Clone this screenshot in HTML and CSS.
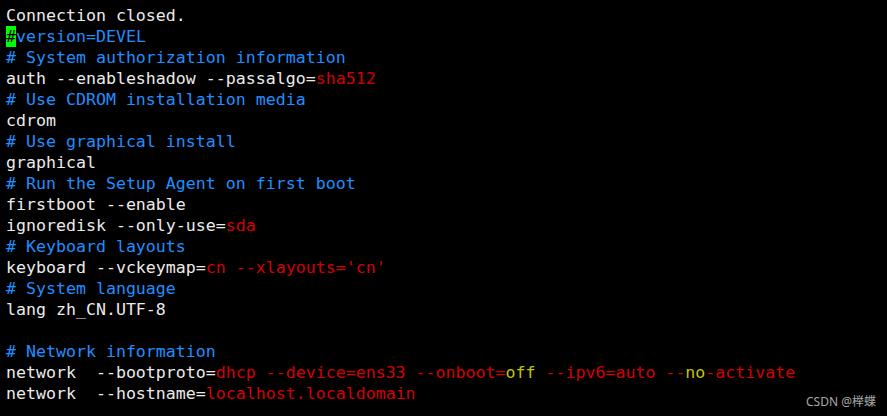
FILE: index.html
```html
<!DOCTYPE html>
<html>
<head>
<meta charset="utf-8">
<link rel="stylesheet" href="styles.css">
</head>
<body>
<div class="term">
<div class="ln">Connection closed.</div>
<div class="ln c"><span class="cur">#</span>version=DEVEL</div>
<div class="ln c"># System authorization information</div>
<div class="ln">auth --enableshadow --passalgo=<span class="r">sha512</span></div>
<div class="ln c"># Use CDROM installation media</div>
<div class="ln">cdrom</div>
<div class="ln c"># Use graphical install</div>
<div class="ln">graphical</div>
<div class="ln c"># Run the Setup Agent on first boot</div>
<div class="ln">firstboot --enable</div>
<div class="ln">ignoredisk --only-use=<span class="r">sda</span></div>
<div class="ln c"># Keyboard layouts</div>
<div class="ln">keyboard --vckeymap=<span class="r">cn --xlayouts='cn'</span></div>
<div class="ln c"># System language</div>
<div class="ln">lang zh_CN.UTF-8</div>
<div class="ln"> </div>
<div class="ln c"># Network information</div>
<div class="ln">network  --bootproto=<span class="r">dhcp --device=ens33 --onboot=</span><span class="y">off</span><span class="r"> --ipv6=auto --</span><span class="y">no</span><span class="r">-activate</span></div>
<div class="ln">network  --hostname=<span class="r">localhost.localdomain</span></div>
</div>
<div class="wm">CSDN @榉蝶</div>
</body>
</html>
```
FILE: styles.css
```css
html, body {
  margin: 0;
  padding: 0;
  background: #000;
  width: 887px;
  height: 416px;
  overflow: hidden;
}
.term {
  padding: 5px 0 0 6px;
  font-family: "DejaVu Sans Mono", monospace;
  font-size: 16.6px;
  line-height: 21px;
  color: #ebebeb;
}
.ln {
  height: 21px;
  white-space: pre;
}
.c { color: #1f8fff; }
.r { color: #d20000; }
.y { color: #c4c400; }
.cur {
  background: #00ff00;
  color: #000;
  display: inline-block;
  height: 21px;
}
.wm {
  position: absolute;
  left: 806px;
  top: 394px;
  font-family: "Noto Sans", "Noto Sans CJK SC", sans-serif;
  font-size: 12px;
  line-height: 16px;
  color: #a8a8a8;
}
```
